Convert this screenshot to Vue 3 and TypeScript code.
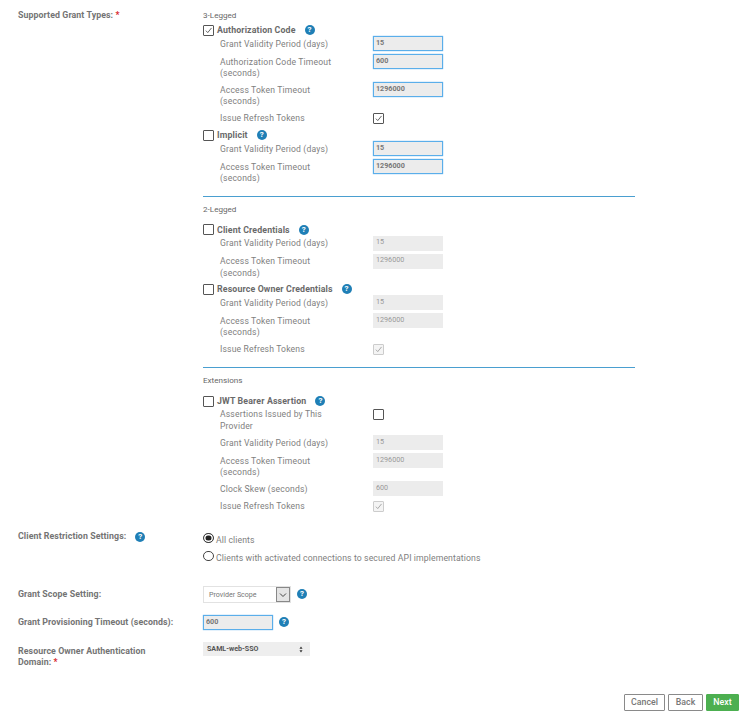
<script setup lang="ts">
interface Row { label: string; two?: boolean; value?: string; check?: boolean; tall?: boolean }
interface GrantType { name: string; checked: boolean; active: boolean; rows: Row[] }
interface Section { title: string; top: string; types: GrantType[] }

const gv = (value = '15'): Row => ({ label: 'Grant Validity Period (days)', value })
const at: Row = { label: 'Access Token Timeout (seconds)', two: true, value: '1296000' }
const refresh: Row = { label: 'Issue Refresh Tokens', check: true }

const sections: Section[] = [
  {
    title: '3-Legged', top: 'first',
    types: [
      { name: 'Authorization Code', checked: true, active: true, rows: [gv(), { label: 'Authorization Code Timeout (seconds)', two: true, value: '600' }, at, refresh] },
      { name: 'Implicit', checked: false, active: true, rows: [gv(), at] },
    ],
  },
  {
    title: '2-Legged', top: 'second',
    types: [
      { name: 'Client Credentials', checked: false, active: false, rows: [gv(), at] },
      { name: 'Resource Owner Credentials', checked: false, active: false, rows: [gv(), at, refresh] },
    ],
  },
  {
    title: 'Extensions', top: 'third',
    types: [
      {
        name: 'JWT Bearer Assertion', checked: false, active: false,
        rows: [{ label: 'Assertions Issued by This Provider', two: true, check: false, tall: true }, gv(), at, { label: 'Clock Skew (seconds)', value: '600' }, refresh],
      },
    ],
  },
]
</script>

<template>
  <main class="page">
    <div class="form-row grants">
      <div class="label">Supported Grant Types: <span class="req">*</span></div>
      <div class="col">
        <section v-for="(s, i) in sections" :key="s.title" class="section" :class="[s.top, { ruled: i < 2 }]">
          <div class="section-title">{{ s.title }}</div>
          <div v-for="t in s.types" :key="t.name" class="type">
            <div class="type-head">
              <span class="box big" :class="{ on: t.checked }">
                <svg v-if="t.checked" viewBox="0 0 12 12"><path d="M2.5 6.2 5 8.8 10 2.6" /></svg>
              </span>
              <span class="type-name">{{ t.name }}</span>
              <span class="help">?</span>
            </div>
            <div v-for="r in t.rows" :key="r.label" class="sub" :class="{ two: r.two, tall: r.tall, chk: r.value === undefined && !r.two }">
              <div class="sub-label">{{ r.label }}</div>
              <input v-if="r.value !== undefined" class="field" :class="{ active: t.active }" :value="r.value" readonly />
              <span v-else class="box small" :class="{ muted: !t.active && r.check, plain: r.check === false }">
                <svg v-if="r.check" viewBox="0 0 12 12"><path d="M2.5 6.2 5 8.8 10 2.6" /></svg>
              </span>
            </div>
          </div>
        </section>
      </div>
    </div>

    <div class="form-row restrict">
      <div class="label">Client Restriction Settings: <span class="help in-label">?</span></div>
      <div class="col radios">
        <div class="radio-row"><span class="radio on"></span>All clients</div>
        <div class="radio-row"><span class="radio"></span>Clients with activated connections to secured API implementations</div>
      </div>
    </div>

    <div class="form-row scope">
      <div class="label">Grant Scope Setting:</div>
      <div class="col inline">
        <div class="select">
          <span class="select-text">Provider Scope</span>
          <span class="select-btn"><svg viewBox="0 0 10 10"><path d="M2 3.5 5 6.5 8 3.5" /></svg></span>
        </div>
        <span class="help">?</span>
      </div>
    </div>

    <div class="form-row timeout">
      <div class="label">Grant Provisioning Timeout (seconds):</div>
      <div class="col inline gap">
        <input class="field active" value="600" readonly />
        <span class="help">?</span>
      </div>
    </div>

    <div class="form-row domain">
      <div class="label narrow">Resource Owner Authentication Domain: <span class="req">*</span></div>
      <div class="col">
        <div class="domain-select">
          <span>SAML-web-SSO</span>
          <svg viewBox="0 0 6 10"><path d="M3 0.5 5.3 4H0.7ZM3 9.5 0.7 6H5.3Z" /></svg>
        </div>
      </div>
    </div>

    <div class="actions">
      <button type="button" class="btn">Cancel</button>
      <button type="button" class="btn">Back</button>
      <button type="button" class="btn primary">Next</button>
    </div>
  </main>
</template>

<style>
html, body { margin: 0; background: #fff; }
</style>

<style scoped>
.page {
  width: 746px;
  height: 716px;
  box-sizing: border-box;
  padding: 9px 7px 0 18px;
  font-family: Roboto, "Liberation Sans", sans-serif;
  font-size: 8.7px;
  color: #777;
  display: flex;
  flex-direction: column;
  overflow: hidden;
}
.form-row { display: flex; }
.label {
  width: 185px;
  flex: none;
  font-size: 8.8px;
  font-weight: 700;
  color: #747474;
  line-height: 11.5px;
  letter-spacing: 0.08px;
}
.grants .label { padding-top: 1px; }
.label.narrow { width: 150px; margin-right: 35px; }
.req { color: #d8232a; }
.col { width: 432px; }
.section.ruled { border-bottom: 1px solid #4a9fd0; box-sizing: border-box; }
.section.first { height: 188px; }
.section.second { height: 171px; padding-top: 6px; }
.section.third { padding-top: 6px; }
.section-title { font-size: 8.1px; color: #666; line-height: 12px; margin-bottom: 3px; }
.second .section-title { margin-bottom: 8.5px; }
.third .section-title { margin-bottom: 9px; }
.type + .type { margin-top: 1.5px; }
.type-head { display: flex; align-items: center; height: 12px; }
.type-name { font-size: 8.8px; font-weight: 700; color: #6a6a6a; margin-left: 3px; margin-right: 9px; letter-spacing: 0.13px; }
.box {
  box-sizing: border-box;
  display: inline-flex;
  flex: none;
  border: 1px solid #555;
  background: #fff;
  border-radius: 1px;
}
.box svg { width: 100%; height: 100%; }
.box path { fill: none; stroke: #444; stroke-width: 1.1; }
.box.big { width: 11px; height: 11px; }
.box.small { width: 11px; height: 11px; margin-top: 3px; }
.box.muted { border-color: #ccc; background: #f4f4f4; }
.box.muted path { stroke: #999; }
.box.plain { margin-top: 1.5px; }
.help {
  flex: none;
  display: inline-flex;
  align-items: center;
  justify-content: center;
  width: 10px;
  height: 10px;
  border-radius: 50%;
  background: #1f7fb6;
  color: #fff;
  font-size: 8px;
  font-weight: 700;
  letter-spacing: 0;
  line-height: 1;
}
.sub { display: flex; align-items: flex-start; height: 18px; padding-left: 17px; }
.sub.two { height: 28px; }
.sub.chk { height: 17.5px; }
.sub.tall { height: 28px; }
.third .sub.chk { margin-top: -1px; }
.sub-label {
  box-sizing: border-box;
  width: 153px;
  flex: none;
  padding: 2.5px 30px 0 0;
  line-height: 11.5px;
  letter-spacing: 0.16px;
  font-size: 8.6px;
  color: #808080;
}
.sub.tall .sub-label { padding-top: 2px; }
.sub.chk .sub-label { padding-top: 3px; }
.field {
  box-sizing: border-box;
  width: 70px;
  height: 15px;
  padding: 0 3px 3px;
  margin: 0;
  border: 0;
  outline: none;
  background: #ececec;
  font: 7.2px Roboto, sans-serif;
  color: #999;
}
.field.active {
  border: 1px solid #5aaeea;
  box-shadow: 0 0 1px #5aaeea;
  padding: 0 2px 2px;
  font-weight: 700;
  color: #777;
}
.restrict { margin-top: 15.5px; height: 55px; }
.restrict .label { display: flex; align-items: flex-start; gap: 9px; }
.help.in-label { margin-top: 1px; }
.radio-row { display: flex; align-items: center; height: 18px; letter-spacing: 0.1px; color: #808080; }
.radio {
  box-sizing: border-box;
  width: 10.5px;
  height: 10.5px;
  margin-right: 2.5px;
  margin-top: -4px;
  border: 1px solid #444;
  border-radius: 50%;
  background: #fff;
}
.radio.on { background: #222; box-shadow: inset 0 0 0 1.5px #fff; }
.scope { height: 29px; align-items: flex-start; }
.scope .label { padding-top: 2.5px; }
.scope .inline { align-items: flex-start; }
.scope .help { margin-top: 3px; }
.inline { display: flex; align-items: center; gap: 6px; }
.select {
  box-sizing: border-box;
  display: flex;
  width: 88px;
  height: 17px;
  border: 1px solid #e2e2e2;
  background: #fff;
  color: #777;
  font-size: 7.1px;
  align-items: center;
}
.select-text { flex: 1; padding-left: 5px; }
.select-btn {
  box-sizing: border-box;
  width: 14px;
  height: 100%;
  background: #e4e4e4;
  border: 1px solid #888;
  display: flex;
  align-items: center;
  justify-content: center;
}
.select-btn svg { width: 10px; height: 10px; }
.select-btn path { fill: none; stroke: #444; stroke-width: 1; }
.timeout { height: 27px; align-items: flex-start; }
.timeout .label { padding-top: 1.5px; }
.timeout .inline { align-items: flex-start; }
.timeout .help { margin-top: 2px; }
.domain .label { padding-top: 3.5px; }
.domain-select {
  box-sizing: border-box;
  display: flex;
  align-items: center;
  justify-content: space-between;
  width: 107px;
  height: 14px;
  padding: 0 7px 2px 4px;
  background: #eee;
  font-size: 7.1px;
  font-weight: 700;
  color: #555;
}
.domain-select svg { width: 4px; height: 7px; margin-top: 2px; }
.domain-select path { fill: #333; }
.actions { margin-top: 25px; display: flex; justify-content: flex-end; gap: 3px; }
.btn {
  box-sizing: border-box;
  height: 17px;
  padding: 0;
  width: 41px;
  border: 1px solid #8a8a8a;
  border-radius: 1px;
  background: #fff;
  font: 500 8.8px Roboto, sans-serif;
  color: #777;
}
.btn:nth-child(2) { width: 35px; }
.btn.primary { width: 33px; background: #4caf50; border-color: #4caf50; color: #fff; }
</style>
